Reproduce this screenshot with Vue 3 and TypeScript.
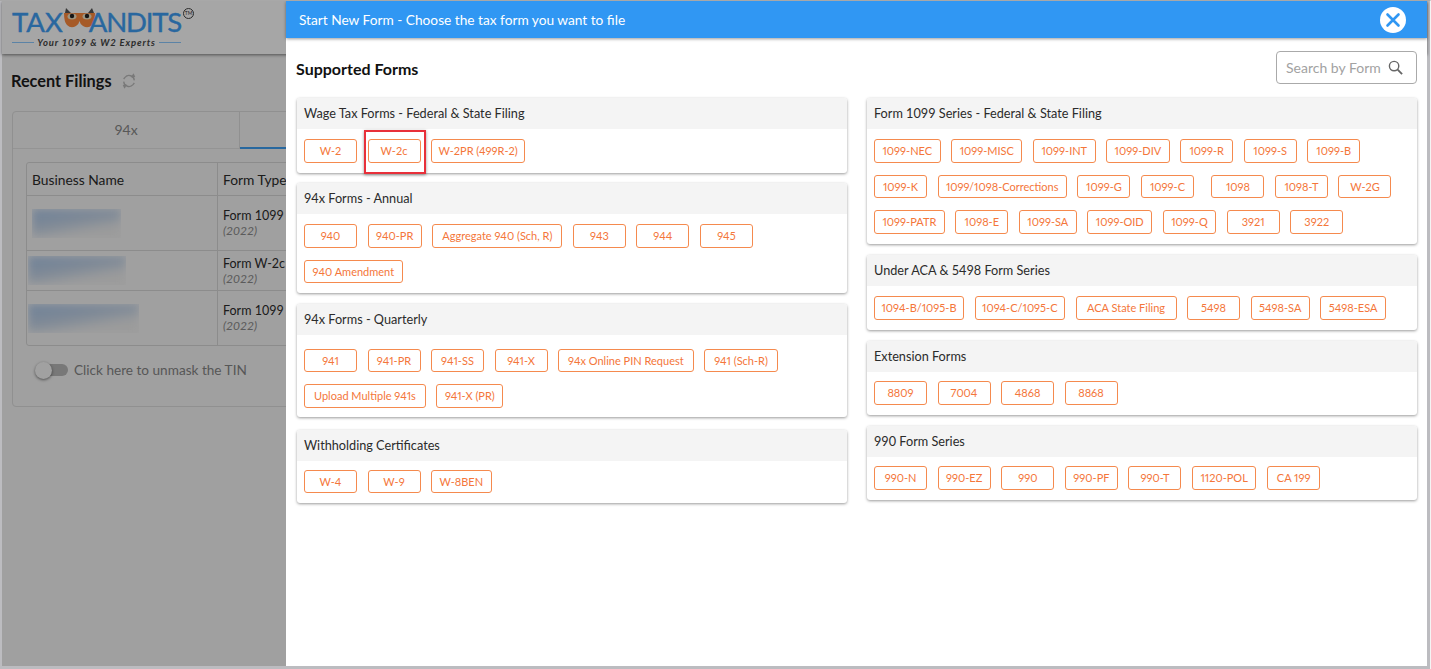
<template>
  <div class="screen">
    <div class="page">
      <header class="topbar">
        <div class="logo">
          <div class="logo-main">
            <span>TAX</span>
            <svg class="owl" viewBox="0 0 33 20" width="33" height="20">
              <path d="M2 5 L3 0 L8 5 Z M31 5 L29 0 L25 5 Z" fill="#555" />
              <path d="M1 5 H32 Q32 14 29 17 Q25 21 20 18 Q17 16 16.500 13 Q16 16 13 18 Q8 21 4 17 Q1 14 1 5 Z" fill="#ff8a3c" />
              <ellipse cx="9" cy="8.500" rx="4.500" ry="3" fill="#f2e6c8" />
              <ellipse cx="24" cy="8.500" rx="4.500" ry="3" fill="#f2e6c8" />
              <circle cx="9" cy="8" r="2.200" fill="#222" />
              <circle cx="24" cy="8" r="2.200" fill="#222" />
            </svg>
            <span class="andits">ANDITS</span>
            <span class="tm">TM</span>
          </div>
          <div class="tagline"><i></i><em>Your 1099 &amp; W2 Experts</em><i></i></div>
        </div>
      </header>

      <section class="recent">
        <div class="recent-title">
          <h2>Recent Filings</h2>
          <svg viewBox="0 0 24 24" width="16" height="16" fill="none" stroke="#bbb" stroke-width="2">
            <path d="M20 11 A8 8 0 0 0 6 6.500 L4 9" />
            <path d="M4 13 A8 8 0 0 0 18 17.500 L20 15" />
            <path d="M17 3 L20 1 L20.500 7 L15 6.500 Z" fill="#bbb" stroke="none" transform="rotate(-20 18 4)" />
            <path d="M7 21 L4 23 L3.500 17 L9 17.500 Z" fill="#bbb" stroke="none" transform="rotate(-20 6 20)" />
          </svg>
        </div>

        <div class="panel">
          <div class="tabs">
            <div class="tab">94x</div>
            <div class="tab active"></div>
          </div>
          <div class="table">
            <div class="row head">
              <div class="cell name">Business Name</div>
              <div class="cell">Form Type</div>
            </div>
            <div v-for="(f, i) in filings" :key="i" class="row" :class="'row-' + i">
              <div class="cell name">
                <span class="masked" :style="{ width: f.w + 'px', marginLeft: f.x + 'px' }"><b></b></span>
              </div>
              <div class="cell">
                <div>{{ f.type }}</div>
                <em>(2022)</em>
              </div>
            </div>
          </div>
          <div class="unmask">
            <span class="switch"></span>
            <span>Click here to unmask the TIN</span>
          </div>
        </div>
      </section>
    </div>

    <div class="overlay"></div>

    <aside class="drawer">
      <div class="drawer-head">
        <span>Start New Form - Choose the tax form you want to file</span>
        <button class="close" aria-label="Close">
          <svg viewBox="0 0 16 16" width="16" height="16" fill="none" stroke="#3097f3" stroke-width="2.600" stroke-linecap="round">
            <path d="M2.500 2.500 L13.500 13.500 M13.500 2.500 L2.500 13.500" />
          </svg>
        </button>
      </div>

      <div class="drawer-body">
        <div class="toolbar">
          <h3>Supported Forms</h3>
          <div class="search">
            <span>Search by Form</span>
            <svg viewBox="0 0 16 16" width="15" height="15" fill="none" stroke="#666" stroke-width="1.500">
              <circle cx="6.500" cy="6.500" r="5" />
              <path d="M10.300 10.300 L15 15" stroke-width="2" />
            </svg>
          </div>
        </div>

        <div class="columns">
          <div v-for="(col, c) in columns" :key="c" class="column">
            <div v-for="group in col" :key="group.title" class="card" :class="group.pad">
              <div class="card-title">{{ group.title }}</div>
              <div class="card-body">
                <a
                  v-for="form in group.forms"
                  :key="form"
                  class="form-btn"
                  :class="btnClass(form)"
                >{{ form }}</a>
                <span v-if="group.highlight" class="highlight"></span>
              </div>
            </div>
          </div>
        </div>
      </div>
    </aside>
  </div>
</template>

<script setup lang="ts">
interface FormGroup {
  title: string
  forms: string[]
  highlight?: boolean
  pad?: string
}

const filings = [
  { type: 'Form 1099', w: 89, x: 0 },
  { type: 'Form W-2c', w: 98, x: -4 },
  { type: 'Form 1099', w: 111, x: -4 },
]

function btnClass(form: string) {
  return {
    num: /^(?!94x|941 )[\dW]/.test(form),
    roomy: form === 'ACA State Filing',
    slim: form.startsWith('1094') || form.startsWith('W-2PR'),
    wide: form === '1098',
  }
}

const columns: FormGroup[][] = [
  [
    {
      title: 'Wage Tax Forms - Federal & State Filing',
      forms: ['W-2', 'W-2c', 'W-2PR (499R-2)'],
      highlight: true,
    },
    {
      title: '94x Forms - Annual',
      forms: ['940', '940-PR', 'Aggregate 940 (Sch, R)', '943', '944', '945', '940 Amendment'],
    },
    {
      title: '94x Forms - Quarterly',
      forms: ['941', '941-PR', '941-SS', '941-X', '94x Online PIN Request', '941 (Sch-R)', 'Upload Multiple 941s', '941-X (PR)'],
      pad: 'low',
    },
    {
      title: 'Withholding Certificates',
      forms: ['W-4', 'W-9', 'W-8BEN'],
      pad: 'tight',
    },
  ],
  [
    {
      title: 'Form 1099 Series - Federal & State Filing',
      forms: [
        '1099-NEC', '1099-MISC', '1099-INT', '1099-DIV', '1099-R', '1099-S', '1099-B',
        '1099-K', '1099/1098-Corrections', '1099-G', '1099-C', '1098', '1098-T', 'W-2G',
        '1099-PATR', '1098-E', '1099-SA', '1099-OID', '1099-Q', '3921', '3922',
      ],
    },
    {
      title: 'Under ACA & 5498 Form Series',
      forms: ['1094-B/1095-B', '1094-C/1095-C', 'ACA State Filing', '5498', '5498-SA', '5498-ESA'],
    },
    {
      title: 'Extension Forms',
      forms: ['8809', '7004', '4868', '8868'],
      pad: 'tight',
    },
    {
      title: '990 Form Series',
      forms: ['990-N', '990-EZ', '990', '990-PF', '990-T', '1120-POL', 'CA 199'],
      pad: 'tight',
    },
  ],
]
</script>

<style>
html,
body {
  margin: 0;
  background: #fff;
}
</style>

<style scoped>
.screen {
  position: relative;
  width: 1431px;
  height: 669px;
  overflow: hidden;
  font-family: Lato, "Open Sans", sans-serif;
  box-sizing: border-box;
  border-top: 1px solid #a8a8a8;
  border-right: 1px solid #f4f4f4;
  background: #bcbcc0;
}

.page {
  height: 665px;
  margin-left: 2px;
  margin-right: 3px;
  background: #f6f6f6;
}

.topbar {
  height: 53px;
  background: #fff;
  box-shadow: 0 1px 3px rgba(0, 0, 0, 0.5);
  padding: 5px 0 0 10px;
  box-sizing: border-box;
}

.logo {
  width: 169px;
}

.logo-main {
  display: flex;
  align-items: center;
  height: 31px;
  color: #3f9ff5;
  -webkit-text-stroke: 0.4px #3f9ff5;
  font-size: 27.500px;
  line-height: 31px;
  position: relative;
}

.owl {
  margin: -7px -7px 0 0;
  flex: none;
}

.andits {
  letter-spacing: -1.200px;
}

.tm {
  position: absolute;
  left: 171px;
  top: 2px;
  width: 9px;
  height: 9px;
  border: 1px solid #444;
  border-radius: 50%;
  font-size: 5px;
  line-height: 9px;
  text-align: center;
  color: #333;
  -webkit-text-stroke: 0;
}

.tagline {
  display: flex;
  align-items: center;
  gap: 3px;
  color: #444;
  font-size: 9.500px;
  font-weight: 700;
  letter-spacing: 0.850px;
  white-space: nowrap;
}

.tagline i {
  flex: 1;
  height: 1px;
  background: #8ccaff;
}

.recent {
  padding: 0 10px;
}

.recent-title {
  display: flex;
  align-items: center;
  gap: 9px;
  height: 53px;
  padding-bottom: 4px;
  margin-left: -1px;
}

.recent-title h2 {
  margin: 0;
  font-size: 16.300px;
  font-weight: 700;
  color: #1c1c1c;
}

.panel {
  width: 420px;
  height: 296px;
  background: #f6f6f6;
  border: 1px solid #ddd;
  border-radius: 4px;
  box-sizing: border-box;
}

.tabs {
  display: flex;
  height: 37px;
}

.tab {
  width: 226px;
  text-align: center;
  line-height: 36px;
  font-size: 14px;
  color: #888;
  border-right: 1px solid #ddd;
  border-bottom: 1px solid #e4e4e4;
}

.tab.active {
  flex: 1;
  border-right: none;
  border-bottom: 2px solid #3ea0f5;
}

.table {
  margin: 13px 0 0 13px;
  border: 1px solid #d8d8d8;
  border-radius: 3px;
  width: 406px;
  font-size: 12.500px;
  color: #2b2b2b;
}

.row {
  display: flex;
  height: 39px;
  border-bottom: 1px solid #d8d8d8;
}

.row:last-child {
  border-bottom: none;
}

.row.head {
  height: 32px;
  font-size: 13.800px;
  line-height: 31px;
}

.row-0,
.row-2 {
  height: 54px;
}

.cell {
  padding: 0 5px;
  line-height: 15px;
  display: flex;
  flex-direction: column;
  justify-content: center;
  white-space: nowrap;
}

.cell.name {
  width: 191px;
  box-sizing: border-box;
  border-right: 1px solid #d8d8d8;
  flex: none;
}

.cell em {
  color: #8c8c8c;
  font-size: 12px;
}

.masked {
  display: block;
  height: 29px;
  overflow: hidden;
}

.masked b {
  display: block;
  height: 100%;
  background: linear-gradient(170deg, #a9c6ea 0%, #c4d4e8 45%, #f0f0f0 75%, #ececec 100%);
  filter: blur(4px);
}

.unmask {
  display: flex;
  align-items: center;
  gap: 6px;
  margin: 16px 0 0 23px;
  color: #868686;
  font-size: 13.600px;
}

.switch {
  position: relative;
  width: 32px;
  height: 12px;
  background: #b8b8b8;
  border-radius: 6px;
}

.switch::before {
  content: "";
  position: absolute;
  left: -1px;
  top: -2.500px;
  width: 17px;
  height: 17px;
  background: #f8f8f8;
  border-radius: 50%;
  box-shadow: 0 1px 3px rgba(0, 0, 0, 0.5);
}

.overlay {
  position: absolute;
  left: 2px;
  top: 0;
  right: 3px;
  height: 665px;
  background: rgba(0, 0, 0, 0.35);
}

.drawer {
  position: absolute;
  left: 286px;
  top: 0;
  width: 1141px;
  height: 665px;
  background: #fff;
}

.drawer-head {
  display: flex;
  align-items: center;
  justify-content: space-between;
  height: 37px;
  padding: 0 21px 0 13px;
  background: #3097f3;
  color: #fff;
  font-size: 13.700px;
  box-shadow: 0 1px 3px rgba(0, 0, 0, 0.4);
}

.close {
  width: 26px;
  height: 26px;
  padding: 0;
  border: none;
  border-radius: 50%;
  background: #fff;
  display: flex;
  align-items: center;
  justify-content: center;
}

.drawer-body {
  padding: 12px 10px 0 11px;
}

.toolbar {
  display: flex;
  align-items: center;
  justify-content: space-between;
  height: 34px;
  margin: 0 0 14px -1px;
}

.toolbar h3 {
  margin: 2px 0 0;
  font-size: 16px;
  font-weight: 700;
  color: #111;
}

.search {
  display: flex;
  align-items: center;
  justify-content: space-between;
  width: 141px;
  height: 33px;
  padding: 0 13px 0 9px;
  box-sizing: border-box;
  border: 1px solid #aaa;
  border-radius: 4px;
  color: #a2a2a2;
  font-size: 14px;
}

.columns {
  display: flex;
  gap: 20px;
}

.column {
  width: 550px;
  display: flex;
  flex-direction: column;
  gap: 10.500px;
}

.column:last-child {
  gap: 11.500px;
}

.card {
  border-radius: 3px;
  background: #fff;
  box-shadow: 0 1px 3px rgba(0, 0, 0, 0.4);
}

.card.low {
  margin-bottom: 2.500px;
}

.card-title {
  height: 31px;
  line-height: 31px;
  padding: 0 7px;
  background: #f4f4f4;
  color: #2b2b2b;
  font-size: 12.700px;
  border-radius: 3px 3px 0 0;
}

.card-body {
  position: relative;
  display: flex;
  flex-wrap: wrap;
  gap: 12px 10.500px;
  padding: 10px 7px;
}

.low .card-body {
  padding: 14px 7px 9px;
}

.tight .card-body {
  padding: 9px 7px 10px;
}

.form-btn {
  min-width: 53px;
  height: 23.500px;
  line-height: 21.500px;
  padding: 0 9px;
  box-sizing: border-box;
  text-align: center;
  border: 1px solid #f58a4e;
  border-radius: 3px;
  color: #f4763a;
  font-size: 11px;
  font-variant-numeric: proportional-nums;
  white-space: nowrap;
}

.form-btn.num {
  padding: 0 7.500px;
}

.form-btn.roomy {
  padding: 0 10.500px;
}

.form-btn.slim {
  padding: 0 6.500px;
}

.form-btn.wide {
  margin-left: 7px;
}

.highlight {
  position: absolute;
  left: 67px;
  top: 1px;
  width: 62px;
  height: 44px;
  border: 2px solid #e8303a;
  box-shadow: 0 1px 3px rgba(0, 0, 0, 0.4);
  box-sizing: border-box;
}
</style>
